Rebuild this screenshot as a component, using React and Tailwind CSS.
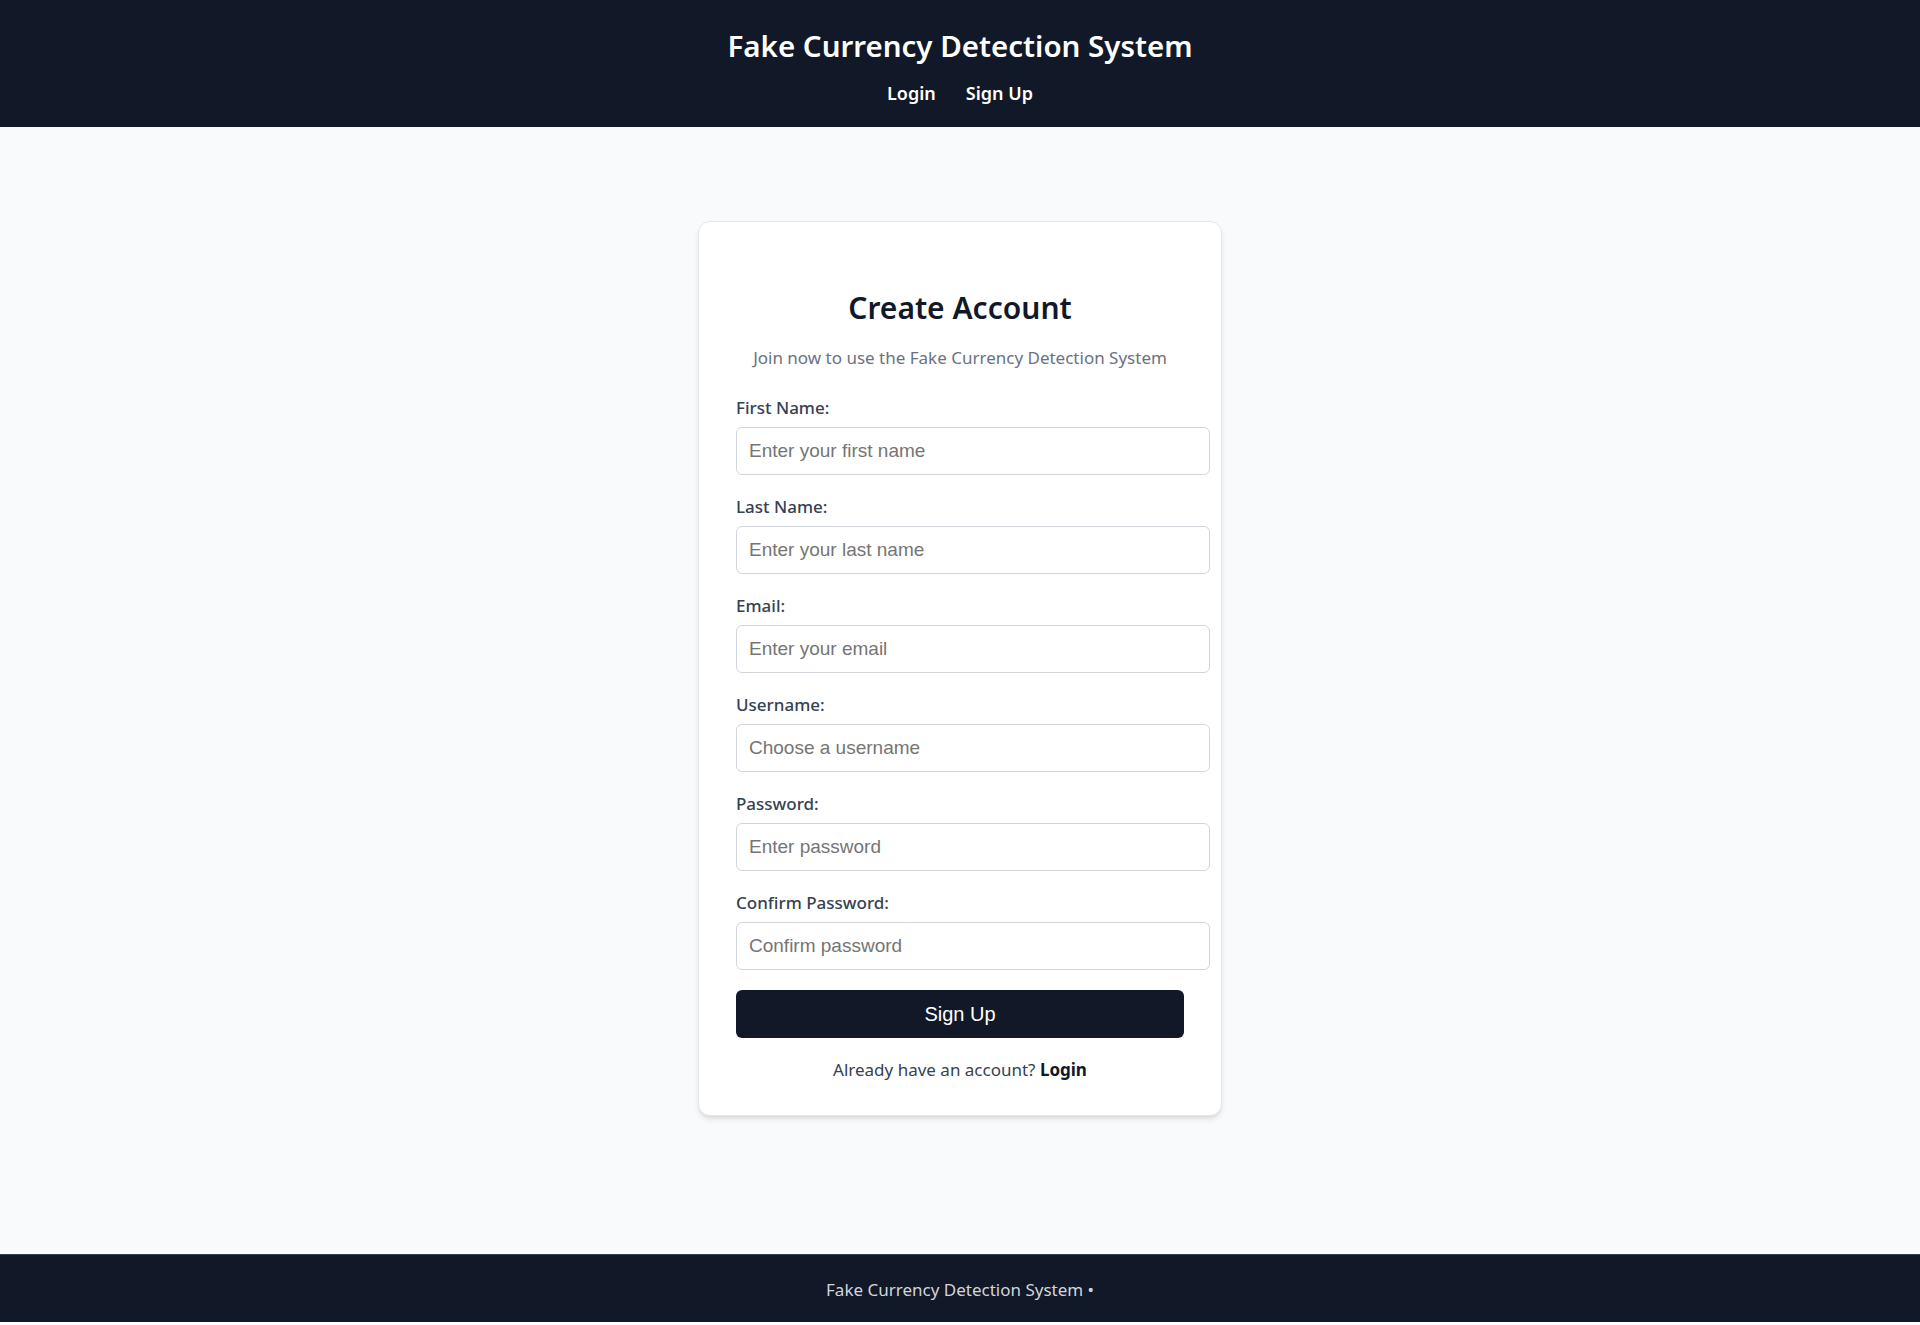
export default function App() {
  const fields = [
    ["First Name:", "Enter your first name", "text"],
    ["Last Name:", "Enter your last name", "text"],
    ["Email:", "Enter your email", "email"],
    ["Username:", "Choose a username", "text"],
    ["Password:", "Enter password", "password"],
    ["Confirm Password:", "Confirm password", "password"],
  ];
  return (
    <div className="flex min-h-[1322px] flex-col bg-gray-50 font-['Noto_Sans',sans-serif]">
      <header className="flex h-[127px] flex-col items-center bg-[#111827] text-white">
        <h1 className="mt-[26px] text-[29.5px] font-semibold leading-[40px]">
          Fake Currency Detection System
        </h1>
        <nav className="mt-[15px] flex gap-[30px] text-[18px] font-semibold leading-[24px]">
          <a href="#">Login</a>
          <a href="#">Sign Up</a>
        </nav>
      </header>

      <main className="flex-1 pt-[94px]">
        <div className="mx-auto w-[524px] rounded-xl border border-gray-200 bg-white px-[37px] pb-[33px] pt-[68px] shadow-md">
          <h2 className="text-center text-[30px] font-semibold leading-[36px] text-[#111827]">
            Create Account
          </h2>
          <p className="mt-[20px] text-center text-[17px] leading-[24px] text-gray-500">
            Join now to use the Fake Currency Detection System
          </p>
          <form className="mt-[27px]" onSubmit={(e) => e.preventDefault()}>
            {fields.map(([label, ph, type]) => (
              <div key={label} className="mb-[21px]">
                <label className="mb-[8px] block text-[17px] font-medium leading-[22px] text-gray-700">
                  {label}
                </label>
                <input
                  type={type}
                  placeholder={ph}
                  className="block h-12 w-[474px] rounded-md border border-gray-300 bg-white px-3 font-['Liberation_Sans',Arial,sans-serif] text-[19px] text-gray-900 outline-none placeholder:text-[#757575]"
                />
              </div>
            ))}
            <button
              type="submit"
              className="-mt-[1px] block h-12 w-full rounded-md bg-[#111827] font-['Liberation_Sans',Arial,sans-serif] text-[20px] text-white"
            >
              Sign Up
            </button>
          </form>
          <p className="mt-[20px] text-center text-[17px] leading-[24px] text-gray-700">
            Already have an account?{" "}
            <a href="#" className="font-bold text-[#111827]">
              Login
            </a>
          </p>
        </div>
      </main>

      <footer className="flex h-[68px] items-center justify-center border-t border-gray-700 bg-[#111827] pt-[2px] text-[17px] text-gray-300">
        Fake Currency Detection System •
      </footer>
    </div>
  );
}
